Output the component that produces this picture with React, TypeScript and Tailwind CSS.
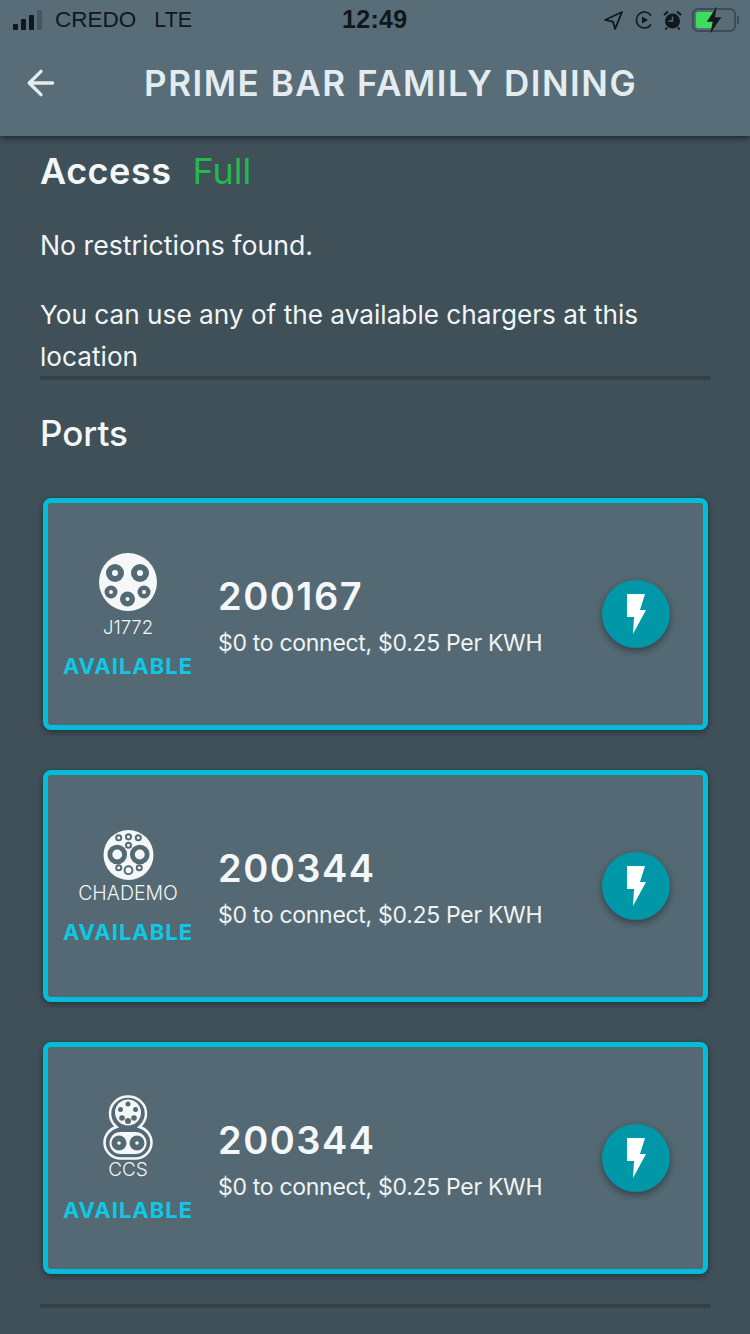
import React from 'react';
import { ArrowLeft } from 'lucide-react';

const J1772Icon = () => (
  <svg width="58" height="58" viewBox="0 0 58 58">
    <circle cx="29" cy="29" r="29" fill="#f5f8f9" />
    {[
      [16, 20, 9, 3],
      [41, 20, 9, 3],
      [12, 39, 6.5, 2],
      [45, 39, 6.5, 2],
      [28.5, 46, 7.5, 2],
    ].map(([cx, cy, r, dot]) => (
      <g key={`${cx}-${cy}`}>
        <circle cx={cx} cy={cy} r={r} fill="#546973" />
        <circle cx={cx} cy={cy} r={dot} fill="#f5f8f9" />
      </g>
    ))}
  </svg>
);

const ChademoIcon = () => (
  <svg width="51" height="50" viewBox="0 0 52 51">
    <circle cx="26" cy="25.5" r="25.5" fill="#f5f8f9" />
    <circle cx="14.5" cy="25" r="10" fill="#546973" />
    <circle cx="14.5" cy="25" r="5" fill="#f5f8f9" />
    <circle cx="37.5" cy="25" r="10" fill="#546973" />
    <circle cx="37.5" cy="25" r="5" fill="#f5f8f9" />
    {[
      [16, 8, 2.6],
      [26, 7, 2.6],
      [36, 8, 2.6],
      [26, 15.5, 2.6],
      [16, 38.5, 2.6],
      [26, 41, 4],
      [37, 38.5, 2.6],
    ].map(([cx, cy, r]) => (
      <circle key={`${cx}-${cy}`} cx={cx} cy={cy} r={r} fill="#f5f8f9" stroke="#546973" strokeWidth="2" />
    ))}
  </svg>
);

const CcsIcon = () => (
  <svg width="50" height="65" viewBox="0 0 50 65">
    <path
      d="M25 1.5C14.500 1.500 7 9.500 7 18.500c0 6 3 10.500 6.500 13.500C6.500 34 1.500 40 1.500 47.500c0 9 7.500 16 16 16h15c8.500 0 16-7 16-16 0-7.500-5-13.500-12-15.500 3.500-3 6.500-7.500 6.500-13.500C43 9.500 35.500 1.500 25 1.500Z"
      fill="none"
      stroke="#f5f8f9"
      strokeWidth="2.5"
    />
    <circle cx="25" cy="17.500" r="13" fill="#f5f8f9" />
    {[
      [25, 9, 2.500],
      [17.500, 14.500, 2.500],
      [32.500, 14.500, 2.500],
      [19, 23, 2.800],
      [31, 23, 2.800],
      [25, 26, 3],
    ].map(([cx, cy, r]) => (
      <circle key={`${cx}-${cy}`} cx={cx} cy={cy} r={r} fill="#546973" />
    ))}
    <rect x="6.500" y="37" width="37" height="22" rx="11" fill="#f5f8f9" />
    <circle cx="16" cy="48" r="7.500" fill="#546973" />
    <circle cx="16" cy="48" r="1.800" fill="#f5f8f9" />
    <circle cx="34" cy="48" r="7.500" fill="#546973" />
    <circle cx="34" cy="48" r="1.800" fill="#f5f8f9" />
  </svg>
);

const Bolt = () => (
  <svg width="19" height="40" viewBox="0 0 19 40">
    <path d="M0 0h18l-5 16h6L6 40l1-17H0Z" fill="#ffffff" />
  </svg>
);

interface PortCardProps {
  icon: React.ReactNode;
  type: string;
  id: string;
  columnClass: string;
  labelClass: string;
  statusClass: string;
}

const PortCard: React.FC<PortCardProps> = ({ icon, type, id, columnClass, labelClass, statusClass }) => (
  <div className="flex h-[232px] items-center rounded-[8px] border-[5px] border-[#04bed9] bg-[#546973] pl-[15px] pr-[33px] shadow-[0_2px_6px_rgba(0,0,0,0.4)]">
    <div className={`flex w-[130px] flex-col items-center ${columnClass}`}>
      {icon}
      <span className={`leading-[26px] font-light text-[#f1f5f6] ${labelClass}`}>{type}</span>
      <span className={`text-[22px] font-bold leading-[26px] tracking-[1px] text-[#0fc8e4] ${statusClass}`}>AVAILABLE</span>
    </div>
    <div className="ml-[25px] flex flex-1 flex-col pt-[3px]">
      <span className="text-[38px] font-semibold leading-[46px] tracking-[1.5px] text-[#f4f7f8]">{id}</span>
      <span className="mt-[8px] text-[23px] leading-[32px] tracking-[-0.3px] text-[#eef3f5]">$0 to connect, $0.25 Per KWH</span>
    </div>
    <button className="flex h-[68px] w-[68px] items-center justify-center rounded-full bg-[#0097a9] shadow-[0_3px_7px_rgba(0,0,0,0.4)]">
      <Bolt />
    </button>
  </div>
);

const App: React.FC = () => {
  return (
    <div className="h-[1334px] w-[750px] overflow-hidden bg-[#3f5059] font-['Inter',sans-serif]">
      <header className="relative h-[136px] bg-[#586d78] shadow-[0_2px_6px_rgba(0,0,0,0.55)]">
        <div className="flex h-[40px] items-center justify-between pl-[13px] pr-[11px] text-[#10181c]">
          <div className="flex items-center">
            <div className="flex items-end gap-[3px]">
              <div className="h-[6px] w-[5px] rounded-[1px] bg-[#10181c]" />
              <div className="h-[11px] w-[5px] rounded-[1px] bg-[#10181c]" />
              <div className="h-[15px] w-[5px] rounded-[1px] bg-[#10181c]" />
              <div className="h-[20px] w-[5px] rounded-[1px] bg-[#445660]" />
            </div>
            <span className="ml-[13px] font-['Liberation_Sans',sans-serif] text-[22.5px]">CREDO</span>
            <span className="ml-[18px] font-['Liberation_Sans',sans-serif] text-[21.5px]">LTE</span>
          </div>
          <span className="absolute left-[342px] font-['Liberation_Sans',sans-serif] text-[25px] font-bold tracking-[0.3px]">12:49</span>
          <div className="flex items-center">
            <svg width="19" height="19" viewBox="0 0 18 18">
              <path d="M17 1 1 8.500l7.500 1.500L10.500 17Z" fill="none" stroke="#10181c" strokeWidth="1.700" strokeLinejoin="round" />
            </svg>
            <svg className="ml-[12px]" width="18" height="18" viewBox="0 0 18 18">
              <path d="M16 4.500A8 8 0 1 0 16 13.500" fill="none" stroke="#10181c" strokeWidth="1.600" />
              <path d="M7 5.500 13 9l-6 3.500Z" fill="#10181c" />
            </svg>
            {/* alarm clock */}
            <svg className="ml-[10px]" width="19" height="20" viewBox="0 0 19 20">
              <circle cx="9.500" cy="11" r="7.500" fill="#10181c" />
              <path d="M1 5 5 1.500M18 5l-4-3.500M4 17.500 2.500 19.500M15 17.500l1.500 2" stroke="#10181c" strokeWidth="2" />
              <path d="M9.500 6.500v4.500H5.500" fill="none" stroke="#586d78" strokeWidth="1.400" />
            </svg>
            <div className="relative ml-[10px] flex items-center">
              <div className="flex h-[24px] w-[44px] rounded-[6px] border-2 border-[#3d4d55] p-[2px]">
                <div className="h-full w-[18px] rounded-[2px] bg-[#3ddc5f]" />
              </div>
              <div className="ml-[1px] h-[8px] w-[2px] rounded-r-[1px] bg-[#3d4d55]" />
              <svg className="absolute left-[13px] top-[-3px]" width="18" height="30" viewBox="0 0 20 32">
                <path d="M13 1 2 18h6.500L6 31 18 13h-7Z" fill="#10181c" />
              </svg>
            </div>
          </div>
        </div>
        <div className="flex h-[88px] items-center pb-[2px] pl-[21px]">
          <ArrowLeft size={40} strokeWidth={2} className="text-[#e4ecf0]" />
          <h1 className="ml-[83px] text-[35px] font-semibold leading-none tracking-[1.55px] text-[#e4ecf0]">PRIME BAR FAMILY DINING</h1>
        </div>
      </header>

      <main className="px-[40px]">
        <div className="mt-[12px] flex items-center gap-[21px] text-[36px] leading-[46px]">
          <span className="font-semibold tracking-[0.5px] text-[#f4f7f8]">Access</span>
          <span className="text-[#25b84e]">Full</span>
        </div>
        <p className="mt-[34px] text-[26.7px] leading-[34px] text-[#f1f5f6]">No restrictions found.</p>
        <p className="mt-[32px] text-[26.2px] leading-[42px] text-[#f1f5f6]">
          You can use any of the available chargers at this location
        </p>
        <div className="-mt-[2px] h-[4px] bg-[#334249]" />
        <h2 className="mt-[31px] text-[35px] font-medium leading-[44px] text-[#f4f7f8]">Ports</h2>

        <div className="ml-[3px] mr-[2px] mt-[43px] flex flex-col gap-[40px]">
          <PortCard
            icon={<J1772Icon />}
            type="J1772"
            id="200167"
            columnClass="pt-[4px]"
            labelClass="mt-[3px] text-[18.5px]"
            statusClass="mt-[13px]"
          />
          <PortCard
            icon={<ChademoIcon />}
            type="CHADEMO"
            id="200344"
            columnClass="pt-[3px]"
            labelClass="text-[19.5px]"
            statusClass="mt-[13px]"
          />
          <PortCard
            icon={<CcsIcon />}
            type="CCS"
            id="200344"
            columnClass="pt-[2px]"
            labelClass="-mt-[3px] text-[19px]"
            statusClass="mt-[14px]"
          />
        </div>
        <div className="mt-[30px] h-[4px] bg-[#334249]" />
      </main>
    </div>
  );
};

export default App;
